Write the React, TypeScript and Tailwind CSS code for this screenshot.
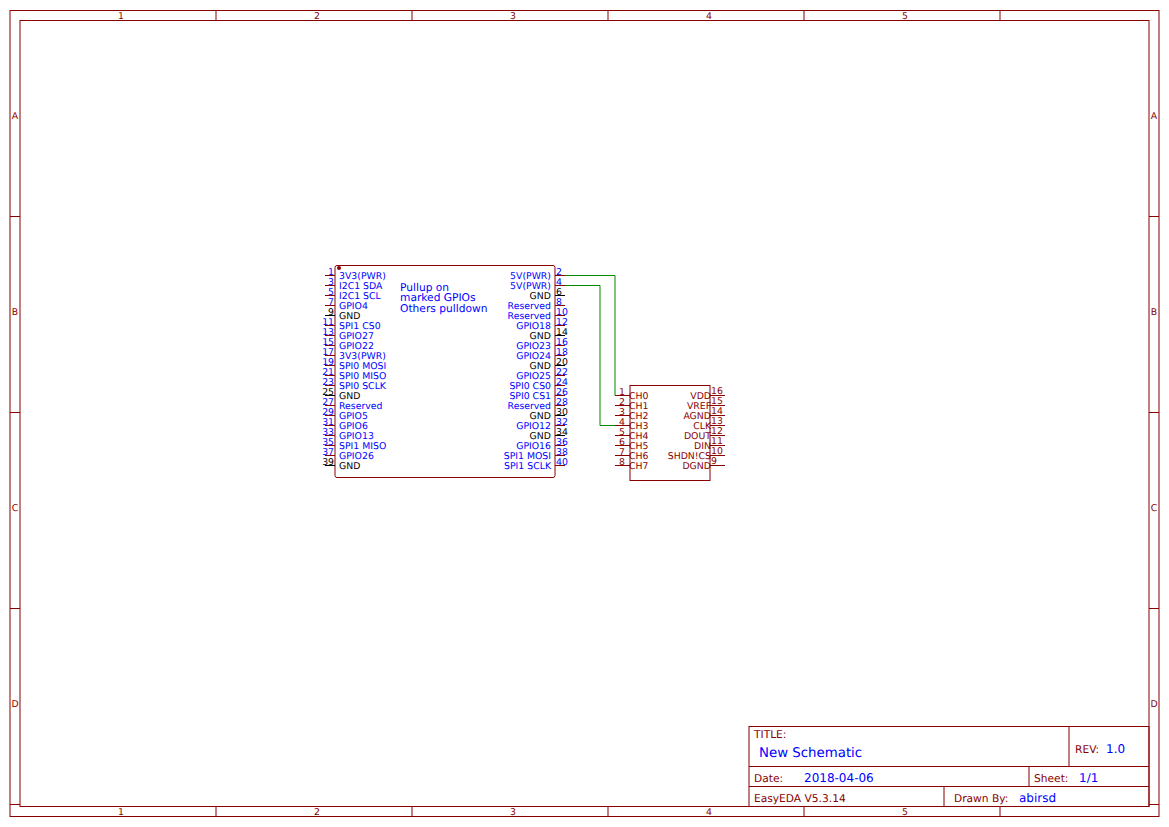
const RED = "#880000";
const BLUE = "#0000ff";
const GREEN = "#008800";

const leftPins = [
  "3V3(PWR)", "I2C1 SDA", "I2C1 SCL", "GPIO4", "GND", "SPI1 CS0", "GPIO27", "GPIO22", "3V3(PWR)", "SPI0 MOSI",
  "SPI0 MISO", "SPI0 SCLK", "GND", "Reserved", "GPIO5", "GPIO6", "GPIO13", "SPI1 MISO", "GPIO26", "GND",
];
const rightPins = [
  "5V(PWR)", "5V(PWR)", "GND", "Reserved", "Reserved", "GPIO18", "GND", "GPIO23", "GPIO24", "GND",
  "GPIO25", "SPI0 CS0", "SPI0 CS1", "Reserved", "GND", "GPIO12", "GND", "GPIO16", "SPI1 MOSI", "SPI1 SCLK",
];
const adcLeft = ["CH0", "CH1", "CH2", "CH3", "CH4", "CH5", "CH6", "CH7"];
const adcRight = ["VDD", "VREF", "AGND", "CLK", "DOUT", "DIN", "SHDN!CS", "DGND"];

function Line({ x1, y1, x2, y2, color = RED }: { x1: number; y1: number; x2: number; y2: number; color?: string }) {
  return <line x1={x1} y1={y1} x2={x2} y2={y2} stroke={color} strokeWidth={1} />;
}

function Label(props: { x: number; y: number; size?: number; color?: string; anchor?: "start" | "middle" | "end"; children: string }) {
  const { x, y, size = 9.33, color = RED, anchor = "start", children } = props;
  return (
    <text x={x} y={y} fontSize={size} fill={color} textAnchor={anchor}>
      {children}
    </text>
  );
}

function SheetFrame() {
  const cols = [216, 412, 608, 804, 1000];
  const rows = [216.5, 412.5, 608.5, 804.5];
  return (
    <g>
      <rect x={10} y={10.5} width={1149} height={806} fill="none" stroke={RED} />
      <rect x={20} y={20.5} width={1129} height={786} fill="none" stroke={RED} />
      {cols.map((x) => (
        <g key={x}>
          <Line x1={x} y1={10.5} x2={x} y2={20.5} />
          <Line x1={x} y1={806.5} x2={x} y2={816.5} />
        </g>
      ))}
      {rows.map((y) => (
        <g key={y}>
          <Line x1={10} y1={y} x2={20} y2={y} />
          <Line x1={1149} y1={y} x2={1159} y2={y} />
        </g>
      ))}
      {["1", "2", "3", "4", "5"].map((n, i) => (
        <g key={n}>
          <Label x={121 + i * 196} y={19} anchor="middle">{n}</Label>
          <Label x={121 + i * 196} y={815} anchor="middle">{n}</Label>
        </g>
      ))}
      {["A", "B", "C", "D"].map((n, i) => (
        <g key={n}>
          <Label x={15} y={119 + i * 196} anchor="middle">{n}</Label>
          <Label x={1154} y={119 + i * 196} anchor="middle">{n}</Label>
        </g>
      ))}
    </g>
  );
}

function TitleBlock() {
  return (
    <g>
      <rect x={749} y={726.5} width={400} height={80} fill="none" stroke={RED} />
      <Line x1={749} y1={766.5} x2={1149} y2={766.5} />
      <Line x1={749} y1={786.5} x2={1149} y2={786.5} />
      <Line x1={1069} y1={726.5} x2={1069} y2={766.5} />
      <Line x1={1029} y1={766.5} x2={1029} y2={786.5} />
      <Line x1={944} y1={786.5} x2={944} y2={806.5} />
      <Label x={754} y={738} size={10.67}>TITLE:</Label>
      <Label x={759} y={757} size={13.33} color={BLUE}>New Schematic</Label>
      <Label x={1075} y={753} size={10.67}>REV:</Label>
      <Label x={1106} y={753} size={12} color={BLUE}>1.0</Label>
      <Label x={754} y={782} size={10.67}>Date:</Label>
      <Label x={804} y={782} size={12} color={BLUE}>2018-04-06</Label>
      <Label x={1034} y={782} size={10.67}>Sheet:</Label>
      <Label x={1079} y={782} size={12} color={BLUE}>1/1</Label>
      <Label x={754} y={802} size={10.67}>EasyEDA V5.3.14</Label>
      <Label x={954} y={802} size={10.67}>Drawn By:</Label>
      <Label x={1019} y={802} size={12} color={BLUE}>abirsd</Label>
    </g>
  );
}

function PiHeader() {
  return (
    <g>
      <rect x={335} y={265.5} width={220} height={212} rx={2} fill="none" stroke={RED} />
      <circle cx={339} cy={268} r={2} fill={RED} />
      {leftPins.map((name, i) => {
        const y = 275.5 + i * 10;
        const gnd = name === "GND";
        return (
          <g key={i}>
            <Line x1={325} y1={y} x2={335} y2={y} color={gnd ? "#000000" : RED} />
            <Label x={334} y={y - 0.5} anchor="end" color={gnd ? "#000000" : BLUE}>{String(i * 2 + 1)}</Label>
            <Label x={339} y={y + 3.5} color={gnd ? "#000000" : BLUE}>{name}</Label>
          </g>
        );
      })}
      {rightPins.map((name, i) => {
        const y = 275.5 + i * 10;
        const gnd = name === "GND";
        return (
          <g key={i}>
            <Line x1={555} y1={y} x2={565} y2={y} color={gnd ? "#000000" : RED} />
            <Label x={556} y={y - 0.5} color={gnd ? "#000000" : BLUE}>{String(i * 2 + 2)}</Label>
            <Label x={551} y={y + 3.5} anchor="end" color={gnd ? "#000000" : BLUE}>{name}</Label>
          </g>
        );
      })}
      <Label x={400} y={290.5} size={10.67} color={BLUE}>Pullup on</Label>
      <Label x={400} y={301} size={10.67} color={BLUE}>marked GPIOs</Label>
      <Label x={400} y={311.5} size={10.67} color={BLUE}>Others pulldown</Label>
    </g>
  );
}

function AdcChip() {
  return (
    <g>
      <rect x={630} y={385.5} width={80} height={95} fill="none" stroke={RED} />
      {adcLeft.map((name, i) => {
        const y = 395.5 + i * 10;
        return (
          <g key={name}>
            <Line x1={615} y1={y} x2={630} y2={y} />
            <Label x={625} y={y - 0.5} anchor="end">{String(i + 1)}</Label>
            <Label x={629} y={y + 3.5}>{name}</Label>
          </g>
        );
      })}
      {adcRight.map((name, i) => {
        const y = 395.5 + i * 10;
        return (
          <g key={name}>
            <Line x1={710} y1={y} x2={725} y2={y} />
            <Label x={711} y={y - 1.5}>{String(16 - i)}</Label>
            <Label x={711} y={y + 3.5} anchor="end">{name}</Label>
          </g>
        );
      })}
    </g>
  );
}

export default function App() {
  return (
    <div className="h-[827px] w-[1169px] overflow-hidden bg-white">
      <svg width={1169} height={827} viewBox="0 0 1169 827" textRendering="geometricPrecision" className="block font-['DejaVu_Sans',sans-serif]">
        <SheetFrame />
        <TitleBlock />
        <PiHeader />
        <AdcChip />
        <polyline points="565,275.5 615,275.5 615,395.5" fill="none" stroke={GREEN} />
        <polyline points="565,285.5 600,285.5 600,425.5 615,425.5" fill="none" stroke={GREEN} />
      </svg>
    </div>
  );
}
